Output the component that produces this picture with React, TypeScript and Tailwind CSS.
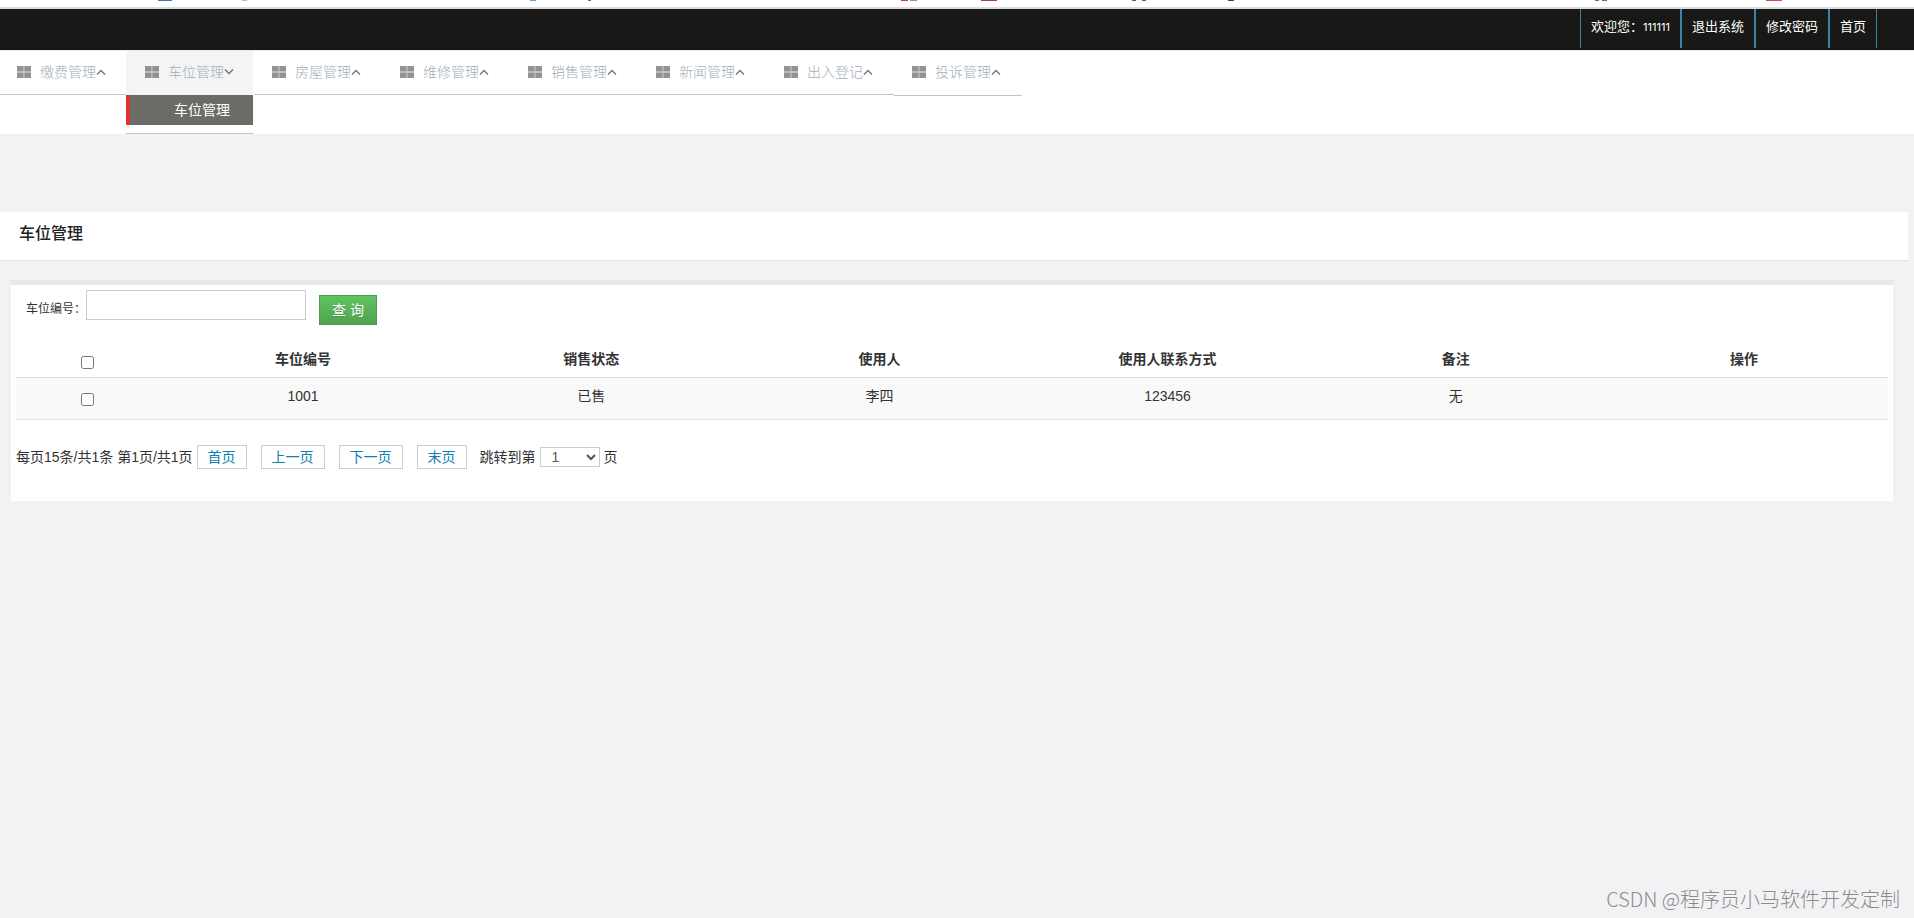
import { useState } from 'react';

const menus = [
  { label: '缴费管理', children: [] },
  { label: '车位管理', children: ['车位管理'] },
  { label: '房屋管理', children: [] },
  { label: '维修管理', children: [] },
  { label: '销售管理', children: [] },
  { label: '新闻管理', children: [] },
  { label: '出入登记', children: [] },
  { label: '投诉管理', children: [] },
];

const columns = ['车位编号', '销售状态', '使用人', '使用人联系方式', '备注', '操作'];

const rows = [['1001', '已售', '李四', '123456', '无', '']];

// Lower edges of the bookmark icons: x, width, colour
const bookmarks: [number, number, string][] = [
  [158, 14, '#4a72b8'],
  [242, 5, '#b9bcc0'],
  [530, 6, '#5fa9c4'],
  [588, 3, '#6a6a9c'],
  [901, 7, '#b04a52'],
  [910, 7, '#6f9fb8'],
  [981, 16, '#a8404c'],
  [1132, 4, '#3a6a90'],
  [1142, 4, '#3a6a90'],
  [1228, 6, '#44444c'],
  [1595, 4, '#4a7a9c'],
  [1602, 5, '#4a7a9c'],
  [1766, 16, '#c8504c'],
];

const GridIcon = () => (
  <svg width="14" height="12" viewBox="0 0 14 12" className="shrink-0">
    <rect width="14" height="12" fill="#c9c9c9" />
    <path d="M0 0h6.3v5.3H0zM7.5 0H14v5.3H7.5zM0 6.7h6.3V12H0zM7.5 6.7H14V12H7.5z" fill="#929292" />
  </svg>
);

const Caret = ({ open }: { open: boolean }) => (
  <svg width="10" height="8" viewBox="0 0 10 8" fill="none" stroke="#777" strokeWidth="1.5" className="shrink-0">
    <path d={open ? 'M1 1.5l4 4 4-4' : 'M1 6.5l4-4 4 4'} />
  </svg>
);

const TopBar = () => (
  <header>
    <div className="h-[9px] overflow-hidden border-b-2 border-[#dcdcdc] bg-white">
      <svg width="1914" height="1" className="block">
        {bookmarks.map(([x, w, fill]) => (
          <rect key={x} x={x} width={w} height="1" fill={fill} />
        ))}
      </svg>
    </div>
    <div className="flex h-[41px] justify-end bg-[#181816] pr-[37px] pb-0.5 text-[13px] leading-9 text-white">
      <span className="border-x border-[#3c82a6] px-[10px]">
        欢迎您：<span className="font-[Inter] text-[11px]">111111</span>
      </span>
      <a href="#logout" className="border-x border-[#3c82a6] px-[10px]">退出系统</a>
      <a href="#password" className="border-x border-[#3c82a6] px-[10px]">修改密码</a>
      <a href="#home" className="border-x border-[#3c82a6] px-[10px]">首页</a>
    </div>
  </header>
);

const Nav = () => {
  const [active, setActive] = useState(1);

  return (
    <nav className="border-t border-[#ececec] bg-white">
      <ul className="flex min-h-[83px] items-start text-sm">
        {menus.map((menu, index) => {
          const open = index === active;
          const last = index === menus.length - 1;
          return (
            <li key={menu.label} className={index === 0 ? 'w-[126px]' : 'w-32'}>
              <button
                type="button"
                onClick={() => setActive(index)}
                className={`flex items-center pb-0.5 font-light text-[#a3aeba] ${
                  index < 1 ? 'pl-[17px]' : open ? 'pl-[19px]' : 'pl-[18px]'
                } ${open ? 'w-[127px] bg-[#f4f4f4]' : 'w-full border-b border-[#c4c4c4]'} ${last ? 'h-[45px]' : 'h-11'}`}
              >
                <GridIcon />
                <span className="ml-[9px]">{menu.label}</span>
                <Caret open={open} />
              </button>
              {open && menu.children.length > 0 && (
                <ul className="w-[127px] border-b border-[#c4c4c4] pb-2">
                  {menu.children.map((child) => (
                    <li key={child}>
                      <a
                        href="#parking"
                        className="block border-l-4 border-[#e0332f] bg-[#6b6c66] pl-11 leading-[30px] text-white"
                      >
                        {child}
                      </a>
                    </li>
                  ))}
                </ul>
              )}
            </li>
          );
        })}
      </ul>
    </nav>
  );
};

const SearchForm = () => (
  <form className="flex items-start pt-[5px] pl-[10px]" onSubmit={(e) => e.preventDefault()}>
    <label htmlFor="code" className="w-[60px] text-xs leading-[38px]">车位编号：</label>
    <input id="code" type="text" className="h-[30px] w-[220px] border border-[#ccc] bg-white px-1.5 text-sm outline-none" />
    <button
      type="submit"
      className="mt-[5px] ml-[13px] h-[30px] w-[58px] border border-[#4c9a4c] bg-linear-to-b from-[#5fc45f] to-[#51a351] text-sm text-white text-shadow-2xs"
    >
      查 询
    </button>
  </form>
);

const DataTable = () => (
  <table className="mt-3 w-full table-fixed text-center text-sm">
    <thead>
      <tr className="h-[37px] border-b border-[#ddd]">
        <th className="w-[143px] pt-2">
          <input type="checkbox" aria-label="全选" className="mx-auto block size-[13px]" />
        </th>
        {columns.map((name) => (
          <th key={name} className="pt-0.5 font-bold">{name}</th>
        ))}
      </tr>
    </thead>
    <tbody>
      {rows.map((row) => (
        <tr key={row[0]} className="h-[42px] border-b border-[#e2e2e2] bg-[#f9f9f9]">
          <td className="pt-0.5">
            <input type="checkbox" aria-label={row[0]} className="mx-auto block size-[13px]" />
          </td>
          {row.map((value, index) => (
            <td key={index} className="pb-1">{value}</td>
          ))}
        </tr>
      ))}
    </tbody>
  </table>
);

const Pagination = () => (
  <div className="mt-[25px] flex items-center text-sm leading-[22px]">
    <span>每页15条/共1条 第1页/共1页</span>
    <div className="ml-1 flex gap-[14px]">
      {['首页', '上一页', '下一页', '末页'].map((name) => (
        <a key={name} href="#page" className="border border-[#ccc] px-[10px] text-[#0d7fb0]">{name}</a>
      ))}
    </div>
    <label htmlFor="page" className="ml-[13px]">跳转到第</label>
    <select id="page" defaultValue="1" className="mx-1 h-5 w-[60px] border border-[#ccc] bg-white pl-[7px] leading-4 text-[#555]">
      <option>1</option>
    </select>
    <span>页</span>
  </div>
);

const App = () => (
  <div className="relative min-h-screen bg-[#f2f2f4] font-['Liberation_Sans','Noto_Sans_CJK_SC',sans-serif] text-[#333]">
    <TopBar />
    <Nav />
    <main className="mt-[78px]">
      <h1 className="mr-1.5 h-[49px] border-b border-[#e4e5e7] bg-white pl-[19px] text-base leading-[44px] font-medium text-[#222]">
        车位管理
      </h1>
      <section className="mt-[19px] mr-[21px] ml-[11px] border-t-[5px] border-[#e7e8ea] bg-white px-[5px] pb-8">
        <SearchForm />
        <DataTable />
        <Pagination />
      </section>
    </main>
    <p className="absolute right-[14px] bottom-[5px] font-['Noto_Sans_CJK_SC',sans-serif] text-xl leading-7 font-light text-[#8c8c8e]">
      CSDN @程序员小马软件开发定制
    </p>
  </div>
);

export default App;
